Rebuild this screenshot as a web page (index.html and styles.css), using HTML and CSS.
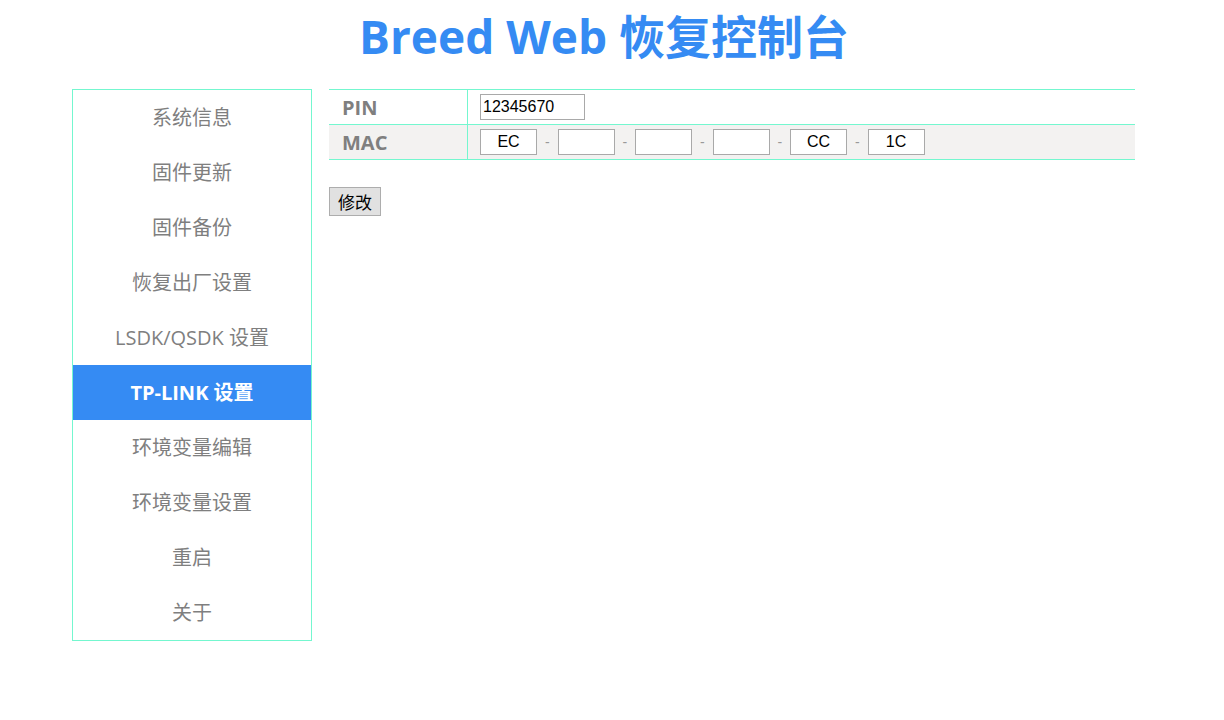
FILE: index.html
```html
<!DOCTYPE html>
<html lang="zh-CN">
<head>
<meta charset="utf-8">
<title>Breed Web 恢复控制台</title>
<link rel="stylesheet" href="styles.css">
</head>
<body>
<h1 class="title">Breed Web 恢复控制台</h1>
<div class="wrap">
  <ul class="menu">
    <li class="item">系统信息</li>
    <li class="item">固件更新</li>
    <li class="item">固件备份</li>
    <li class="item">恢复出厂设置</li>
    <li class="item">LSDK/QSDK 设置</li>
    <li class="item active">TP-LINK 设置</li>
    <li class="item">环境变量编辑</li>
    <li class="item">环境变量设置</li>
    <li class="item">重启</li>
    <li class="item">关于</li>
  </ul>
  <div class="content">
    <table class="form">
      <tr class="row">
        <td class="label">PIN</td>
        <td class="field"><input class="pin" type="text" value="12345670"></td>
      </tr>
      <tr class="row alt">
        <td class="label">MAC</td>
        <td class="field">
          <input class="mac" type="text" value="EC"><span class="sep">-</span><input class="mac" type="text" value=""><span class="sep">-</span><input class="mac" type="text" value=""><span class="sep">-</span><input class="mac" type="text" value=""><span class="sep">-</span><input class="mac" type="text" value="CC"><span class="sep">-</span><input class="mac" type="text" value="1C">
        </td>
      </tr>
    </table>
    <button class="submit" type="button">修改</button>
  </div>
</div>
</body>
</html>
```

FILE: styles.css
```css
html, body {
  margin: 0;
  padding: 0;
  background: #fff;
}
body {
  font-family: "Open Sans", "Noto Sans CJK SC", sans-serif;
}
.title {
  margin: 0 0 17px;
  padding-right: 16px;
  height: 72px;
  line-height: 72px;
  font-family: "Open Sans", "Noto Sans CJK SC", sans-serif;
  font-size: 46px;
  font-weight: bold;
  color: #358bf3;
  text-align: center;
}
.wrap {
  width: 1080px;
  margin: 0 auto;
  display: flex;
  align-items: flex-start;
}
.menu {
  list-style: none;
  margin: 0;
  padding: 0;
  width: 238px;
  border: 1px solid #74f7cf;
  flex: none;
}
.item {
  height: 55px;
  line-height: 56px;
  text-align: center;
  font-size: 20px;
  color: #7f7f7f;
}
.item.active {
  background: #358bf3;
  color: #fff;
  font-weight: bold;
}
.content {
  flex: 1;
  padding: 0 17px;
}
.form {
  width: 100%;
  border-collapse: collapse;
}
.row td {
  height: 34px;
  padding: 0;
  border-top: 1px solid #74f7cf;
  border-bottom: 1px solid #74f7cf;
}
.row.alt {
  background: #f3f2f1;
}
.label {
  width: 125px;
  padding-left: 13px !important;
  border-right: 1px solid #74f7cf;
  font-size: 20px;
  font-weight: bold;
  color: #7f7f7f;
}
.field {
  padding-left: 12px !important;
  font-size: 0;
}
.pin, .mac {
  box-sizing: border-box;
  height: 26px;
  margin: 0;
  border: 1px solid #a9a9a9;
  background: #fff;
  font-family: "Liberation Sans", Arial, sans-serif;
  font-size: 16px;
  color: #000;
  vertical-align: middle;
}
.pin {
  width: 105px;
  padding: 0 2px;
}
.mac {
  width: 57px;
  text-align: center;
  padding: 0;
}
.sep {
  display: inline-block;
  width: 20.5px;
  text-align: center;
  font-family: "Liberation Sans", Arial, sans-serif;
  font-size: 14px;
  color: #999;
  vertical-align: middle;
}
.submit {
  display: block;
  margin-top: 27px;
  height: 29px;
  padding: 0 8px;
  font-family: "Noto Sans CJK SC", sans-serif;
  font-size: 17px;
  color: #000;
  background: #e1e1e1;
  border: 1px solid #adadad;
  border-radius: 0;
}
```
